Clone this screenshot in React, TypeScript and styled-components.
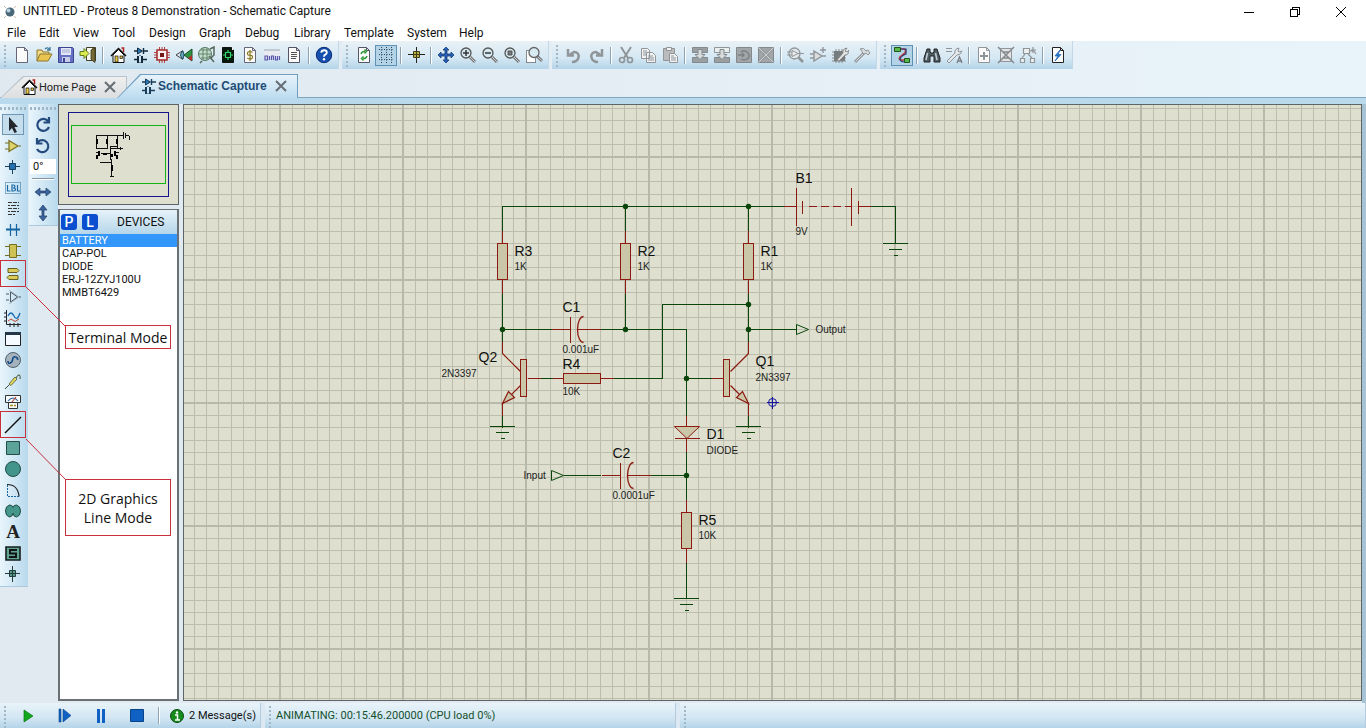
import React, { ReactNode } from "react";
import styled, { createGlobalStyle, css } from "styled-components";

const ui = `Roboto, "Liberation Sans", sans-serif`;
const sheetFont = `"Liberation Sans", Arial, sans-serif`;

const GlobalStyle = createGlobalStyle`
  * { box-sizing: border-box; }
  body { margin: 0; background: #e2eaf1; color: #111; font-family: ${ui}; font-size: 12px; }
  button, input { font: inherit; color: inherit; }
  button { padding: 0; border: 0; background: none; }
`;

const Window = styled.div`
  display: flex;
  flex-direction: column;
  min-height: 100vh;
`;

const TitleBar = styled.header`
  display: flex;
  align-items: center;
  height: 23px;
  padding: 0 2px;
  background: #fff;
`;

const Title = styled.h1`
  flex: 1;
  margin: 0 0 0 5px;
  font-size: 12px;
  font-weight: 400;
  line-height: 23px;
  white-space: nowrap;
`;

const CaptionButton = styled.button`
  display: grid;
  place-items: center;
  width: 46px;
  height: 21px;
`;

const MenuBar = styled.nav`
  display: flex;
  height: 18px;
  background: #fff;
`;

const MenuItem = styled.button<{ $width: number }>`
  width: ${(p) => p.$width}px;
  padding-left: 7px;
  text-align: left;
  line-height: 20px;
  white-space: nowrap;
`;

const ToolbarRow = styled.div`
  display: flex;
  gap: 3px;
  height: 28px;
  background: linear-gradient(90deg, #e1e9f0, #e9f3fa);
`;

const ToolGroup = styled.div`
  display: flex;
  align-items: center;
  height: 28px;
  padding-right: 3px;
  background: linear-gradient(#e9f1f5, #d5e8f4 60%, #b4d4e8);
  border-right: 1px solid #c2d8e6;
`;

const Grip = styled.span<{ $across?: boolean }>`
  flex: none;
  ${(p) =>
    p.$across
      ? css`
          width: 26px;
          height: 3px;
          margin: 3px 0 4px;
          background: repeating-linear-gradient(90deg, #9fb6c6 0 2px, transparent 2px 4px);
        `
      : css`
          width: 2px;
          height: 22px;
          margin: 2px 5px 0 4px;
          background: repeating-linear-gradient(#a3b8c6 0 2px, transparent 2px 4px);
        `}
`;

const Divider = styled.span`
  flex: none;
  width: 2px;
  height: 17px;
  margin: 0 3px;
  background: #8ba3b3;
  border-right: 1px solid #fff;
`;

const ToolButton = styled.button<{ $active?: boolean }>`
  display: grid;
  place-items: center;
  flex: none;
  width: 22px;
  height: 21px;
  ${(p) => p.$active && "background: #b3d3e6; outline: 1px solid #5f91b4; outline-offset: -1px;"}
`;

const TabRow = styled.div`
  display: flex;
  align-items: flex-end;
  height: 29px;
  background: linear-gradient(90deg, #e1e9f0, #e9f3fa);
  border-bottom: 1px solid #7fa6bf;
`;

const Tab = styled.div<{ $active?: boolean }>`
  position: relative;
  display: flex;
  align-items: center;
  flex: none;
  width: ${(p) => (p.$active ? 181 : 127)}px;
  height: ${(p) => (p.$active ? 24 : 22)}px;
  margin: 0 0 -1px ${(p) => (p.$active ? -10 : 0)}px;
  padding: 0 9px 0 ${(p) => (p.$active ? 22 : 20)}px;
  z-index: ${(p) => (p.$active ? 1 : 0)};
  &::before, &::after {
    content: "";
    position: absolute;
    inset: 0;
    z-index: -1;
    background: ${(p) => (p.$active ? "#6f9ec0" : "#b9c4cc")};
    clip-path: polygon(0 100%, 23px 0, 100% 0, 100% 100%);
  }
  &::after {
    inset: 1px 1px 0 1px;
    background: ${(p) => (p.$active ? "linear-gradient(#e8f3fa, #bcdcf0)" : "linear-gradient(#efefef, #dcdee0)")};
  }
`;

const TabLabel = styled.button<{ $active?: boolean }>`
  display: flex;
  align-items: center;
  gap: 1px;
  flex: 1;
  font-family: ${(p) => (p.$active ? sheetFont : ui)};
  font-size: ${(p) => (p.$active ? 12 : 11)}px;
  font-weight: ${(p) => (p.$active ? 700 : 400)};
  color: ${(p) => (p.$active ? "#1f4c74" : "#222")};
  white-space: nowrap;
`;

const CloseTab = styled.button`
  display: grid;
  place-items: center;
  width: 16px;
  height: 16px;
`;

const Workspace = styled.main`
  position: relative;
  display: flex;
  flex: 1;
  padding: 6px 4px 2px 0;
  background:
    linear-gradient(#b9d9ec, #b9d9ec) top / 100% 6px no-repeat,
    linear-gradient(#a6c3d6, #a6c3d6) right / 4px 100% no-repeat;
`;

const SideBar = styled.div<{ $second?: boolean }>`
  display: flex;
  flex-direction: column;
  align-items: center;
  align-self: flex-start;
  width: ${(p) => (p.$second ? 29 : 28)}px;
  padding: 0 ${(p) => (p.$second ? 1 : 2)}px 2px 0;
  margin-left: ${(p) => (p.$second ? 1 : 0)}px;
  background: linear-gradient(90deg, #e9f5fc, #b8d9ed);
  border-bottom: 1px solid #a9c9dd;
`;

const SideTool = styled.button<{ $active?: boolean; $marked?: boolean }>`
  display: grid;
  place-items: center;
  width: ${(p) => (p.$marked ? 24 : 22)}px;
  height: ${(p) => (p.$marked ? 25 : 21)}px;
  ${(p) => p.$active && "background: #c4deed; outline: 1px solid #7096b2; outline-offset: -1px;"}
  ${(p) => p.$marked && "outline: 1px solid #c8303c;"}
`;

const Angle = styled.input`
  width: 26px;
  height: 15px;
  margin: 3px 0 4px;
  padding: 0 3px;
  border: 0;
  background: #fff;
  font-size: 11px;
`;

const Rule = styled.span`
  width: 22px;
  height: 2px;
  margin-bottom: 1px;
  background: #8095a4;
  border-bottom: 1px solid #fff;
`;

const Panel = styled.aside`
  display: flex;
  flex-direction: column;
  flex: none;
  gap: 4px;
  width: 121px;
`;

const Preview = styled.div`
  height: 101px;
  background: #dedfce;
  border: 1px solid #5d6466;
`;

const Devices = styled.section`
  flex: 1;
  background: #fff;
  border: 2px solid #6a7174;
  border-top-width: 1px;
`;

const DeviceHeader = styled.div`
  display: flex;
  align-items: center;
  gap: 5px;
  height: 24px;
  padding-left: 1px;
  background: linear-gradient(#e6f2f9, #b5d6ea);
`;

const PickButton = styled.button`
  width: 16px;
  height: 16px;
  border-radius: 3px;
  background: #0b4fd0;
  color: #fff;
  font-size: 14px;
  font-weight: 500;
  line-height: 16px;
`;

const DeviceTitle = styled.h2`
  margin: 0 0 0 14px;
  font-size: 12px;
  font-weight: 400;
  line-height: 16px;
`;

const DeviceList = styled.ul`
  margin: 0;
  padding: 0;
  list-style: none;
`;

const Device = styled.li<{ $selected?: boolean }>`
  padding: 1px 0 0 2px;
  font-size: 11px;
  line-height: 12px;
  white-space: nowrap;
  ${(p) => p.$selected && "background: #3296fa; color: #fff;"}
`;

const Sheet = styled.div`
  position: relative;
  flex: 1;
  min-width: 0;
  margin-left: 4px;
  overflow: hidden;
  background: #dedfce;
  border: 1px solid #5d6466;
`;

const SheetDrawing = styled.svg`
  position: absolute;
  inset: 0;
  width: 100%;
  height: 100%;
  font-family: ${sheetFont};
`;

const Callout = styled.div<{ $top: number; $height: number; $left: number }>`
  position: absolute;
  left: ${(p) => p.$left}px;
  top: ${(p) => p.$top}px;
  display: grid;
  place-items: center;
  width: 106px;
  height: ${(p) => p.$height}px;
  border: 1px solid #c8303c;
  background: #fff;
  font: 400 14px/19px "Open Sans", sans-serif;
  text-align: center;
`;

const Leaders = styled.svg`
  position: absolute;
  left: 0;
  top: 0;
  pointer-events: none;
`;

const StatusBar = styled.footer`
  display: flex;
  gap: 4px;
  height: 25px;
  background: #dce9f2;
`;

const StatusGroup = styled.div<{ $width?: number }>`
  display: flex;
  align-items: center;
  ${(p) => (p.$width ? `width: ${p.$width}px;` : "flex: 1;")}
  background: linear-gradient(#e9f3f9, #d2e6f3 60%, #b4d4e8);
  border-right: 1px solid #b3cbdc;
  font-size: 11px;
  white-space: nowrap;
`;

const SimButton = styled.button`
  display: grid;
  place-items: center;
  flex: none;
  width: 36px;
  height: 21px;
`;

const Messages = styled.button`
  display: flex;
  align-items: center;
  gap: 5px;
  margin-left: 7px;
`;

const Progress = styled.output`
  color: #14502c;
`;

const Glyph = ({ children, size = 18, crisp }: { children: ReactNode; size?: number; crisp?: boolean }) => (
  <svg width={size} height={size} viewBox={`0 0 ${size} ${size}`} fill="none" aria-hidden="true" shapeRendering={crisp ? "crispEdges" : undefined}>
    {children}
  </svg>
);

const Lens = ({ inner, grey = "#555" }: { inner: ReactNode; grey?: string }) => (
  <>
    <path d="M11 11l5 5" stroke="#777" strokeWidth="3" />
    <path d="M11 11l5 5" stroke="#c8c8c8" />
    <circle cx="7" cy="7" r="5" fill="#d5e9f2" stroke={grey} strokeWidth="1.3" />
    {inner}
  </>
);

const house = (
  <>
    <path d="M4 9v7.500h11V9L9.500 3.500z" fill="#fff" stroke="#111" />
    <path d="M2 10l7.500-7.500L17 10" stroke="#111" strokeWidth="1.500" />
    <path d="M12.500 2h2v4" stroke="#b02020" strokeWidth="1.500" />
    <rect x="6" y="10" width="3" height="6" fill="#e6c640" stroke="#111" strokeWidth=".7" />
    <rect x="11" y="10" width="2.500" height="2.500" fill="#e6c640" stroke="#111" strokeWidth=".7" />
  </>
);

const schematic = (c: string) => (
  <>
    <path d="M3 5h4M12 5h5M12.500 2v6M3 13.500h3M16 13.500h-4" stroke={c} strokeWidth="1.400" />
    <path d="M6.500 2l5 3-5 3z" fill="#2878b8" stroke={c} />
    <path d="M7 10v7M11 10v7" stroke={c} strokeWidth="2" />
    <path d="M9 9v1M9 16v1" stroke={c} />
  </>
);

const page = (c: string) => <path d="M3.500 1.500h8l3 3v12h-11zM11.500 1.500v3h3" fill="#fbfbfb" stroke={c} />;
const G = "#8f9599";

const icons: Record<string, ReactNode> = {
  new: page("#667"),
  open: (
    <>
      <path d="M2 15V4h5l1 2h6v3" fill="#f3dc85" stroke="#8b7630" />
      <path d="M2 15l3-7h12l-4 7z" fill="#e9c44e" stroke="#8b7630" />
      <path d="M10 3c2-2 4-1 5 1m0-3v3h-3" stroke="#3f789a" strokeWidth="1.300" />
    </>
  ),
  save: (
    <>
      <path d="M1.500 1.500h14l1 1v14h-15z" fill="#6670c4" stroke="#3c438f" />
      <path d="M4 2h10v7H4z" fill="#e3e7f6" />
      <path d="M5 4h8M5 6h8" stroke="#a4add0" />
      <path d="M5 11h8v5H5z" fill="#c6cce6" />
      <path d="M6 12h2v4H6z" fill="#3c438f" />
    </>
  ),
  exit: (
    <>
      <path d="M7.500 1.500h9v13h-9z" fill="#8d8450" stroke="#444026" />
      <path d="M8 2h5v12H8z" fill="#f7f7ee" />
      <path d="M12 4l4-2v14.500l-4-3z" fill="#766c34" stroke="#3a3620" strokeWidth=".8" />
      <path d="M1 5.500h4V2.500l5 5-5 5v-3H1z" fill="#dcea50" stroke="#5f7c20" />
    </>
  ),
  home: house,
  schematic: schematic("#12283c"),
  pcb: (
    <>
      <path d="M6.500 1v16M9 1v16M11.500 1v16M1 6.500h16M1 9h16M1 11.500h16" stroke="#b84646" />
      <rect x="4" y="4" width="10" height="10" fill="#fbeeee" stroke="#a02828" strokeWidth="1.500" />
      <rect x="7" y="7" width="4" height="4" fill="#701818" />
    </>
  ),
  view3d: (
    <>
      <path d="M1 9l7-4.500M1 9l7 4.500" stroke="#444" />
      <path d="M8 5q-5 4 0 8q2-4 0-8" fill="#63abc8" stroke="#28505f" />
      <path d="M17 3v12L9 9z" fill="#2e9444" stroke="#174f28" />
      <path d="M17 9v6l-4-3z" fill="#b42c2c" />
    </>
  ),
  gerber: (
    <>
      <circle cx="8" cy="8" r="6.500" fill="#c3dccb" stroke="#547564" />
      <path d="M3 4h10M2 8h12M4 12h8M6 2v12M10 2v12" stroke="#63866c" />
      <path d="M12 10l5 6M13 3l4-2v8l-3 3M5 15l-2 2" stroke="#53685a" strokeWidth="1.500" />
    </>
  ),
  design: (
    <>
      <path d="M3.500 1.500h9l2 2v13h-11z" fill="#06180c" stroke="#111" />
      <path d="M13 1v3h2" fill="#fff" />
      <path d="M4 9h2M12 9h2M9 4v2.500M9 11.500V14M6.500 6.500h5v5h-5z" stroke="#32d86e" strokeWidth="1.200" />
    </>
  ),
  bom: (
    <>
      {page("#667")}
      <path d="M11.500 6.500q-1-1-2.500-1-2.500 0-2.500 2t2.500 1.700q2.500 0 2.500 1.900T9 13q-1.500 0-2.700-1M9 4v11" stroke="#8b7a20" strokeWidth="1.200" />
    </>
  ),
  vsm: (
    <>
      <path d="M1 3h16v9H1z" fill="#e8ebf2" />
      <path d="M1 4h16" stroke="#99a6b4" />
      <path d="M2 10h2.500v4H2zM6.500 10v4M8.500 14v-4h2v4M12.500 10v4h2v-4M16.500 10v4" stroke="#5d54ac" strokeWidth="1.200" />
    </>
  ),
  notes: (
    <>
      {page("#556")}
      <path d="M6 6.500h6M6 8.500h6M6 10.500h6M6 12.500h5" stroke="#555" />
    </>
  ),
  help: (
    <>
      <circle cx="9" cy="9" r="7.700" fill="#174fae" stroke="#0c2f77" />
      <path d="M6.200 6.700q.4-2.500 2.900-2.500 2.700 0 2.700 2.200 0 1.500-1.600 2.300Q9 9.300 9 10.700" stroke="#fff" strokeWidth="1.900" />
      <circle cx="9" cy="13.200" r="1.200" fill="#fff" />
    </>
  ),
  refresh: (
    <>
      {page("#556")}
      <path d="M6 8q1-3 4-2.500M12 10q-1 3-4 2.500M9.500 3.500l2 2-2 2M8.500 14.500l-2-2 2-2" stroke="#329938" strokeWidth="1.500" />
    </>
  ),
  grid: <path d="M2 3.500h15M2 8.500h15M2 13.500h15M4.500 1v16M9.500 1v16M14.500 1v16" stroke="#29475b" strokeDasharray="1 1.500" />,
  origin: (
    <>
      <path d="M9.500 1v16M1 8.500h17" stroke="#222" />
      <path d="M6.500 5.500h6v6h-6z" fill="#bbb043" stroke="#3f3c17" />
      <path d="M9.500 5v7M6 8.500h7" stroke="#3f3c17" />
    </>
  ),
  pan: <path d="M9 1l3 3h-2v4h4V6l3 3-3 3v-2h-4v4h2l-3 3-3-3h2v-4H4v2L1 9l3-3v2h4V4H6z" fill="#2560ba" stroke="#173e74" strokeWidth=".8" />,
  zoomIn: <Lens inner={<path d="M4 7h6M7 4v6" stroke="#333" strokeWidth="1.500" />} />,
  zoomOut: <Lens inner={<path d="M4 7h6" stroke="#333" strokeWidth="1.500" />} />,
  zoomAll: <Lens inner={<path d="M5 5h4v4H5z" fill="#777" stroke="#555" />} />,
  zoomArea: (
    <>
      <path d="M1.500 4.500h9v12h-9z" fill="#fff" stroke="#222" strokeDasharray="1 1" />
      <path d="M12 10l5 5" stroke="#777" strokeWidth="3" />
      <path d="M12 10l5 5" stroke="#c8c8c8" />
      <circle cx="9" cy="6.500" r="5" fill="#d8eaf2" stroke="#666" strokeWidth="1.300" />
    </>
  ),
  undo: <path d="M7 16c8 0 9-10 2-10L5 8.500M3 3v6.500h6" stroke={G} strokeWidth="2.500" />,
  redo: <path d="M11 16C3 16 2 6 9 6l4 2.500M15 3v6.500H9" stroke={G} strokeWidth="2.500" />,
  cut: (
    <>
      <path d="M4 1l7 11M14 1L7 12" stroke={G} strokeWidth="2" />
      <circle cx="5" cy="14" r="2.500" stroke={G} strokeWidth="1.700" />
      <circle cx="13" cy="14" r="2.500" stroke={G} strokeWidth="1.700" />
    </>
  ),
  copy: (
    <>
      <path d="M2.500 2.500h6l2 2v8h-8zM7.500 6.500h6l3 3v7h-9z" fill="#f2f2f2" stroke={G} />
      <path d="M4 5h4M4 7h3M4 9h3M9 10h5M9 12h6M9 14h6" stroke={G} />
    </>
  ),
  paste: (
    <>
      <path d="M2.500 2.500h11v12h-11z" fill="#bbb" stroke={G} />
      <path d="M5.500 1.500h5v3h-5zM8.500 7.500h5l3 3v6h-8z" fill="#f2f2f2" stroke={G} />
      <path d="M10 10h3M10 12h5M10 14h5" stroke={G} />
    </>
  ),
  blockCopy: (
    <>
      <path d="M1.500 1.500h15v5h-15zM1.500 11.500h15v5h-15z" fill="#9a9fa2" stroke="#83898c" />
      <path d="M7 3.500h4v5h3l-5 5-5-5h3z" fill="#d6dadb" stroke="#83898c" />
    </>
  ),
  blockMove: (
    <>
      <path d="M1.500 1.500h15v5h-15z" fill="#e9eeef" stroke={G} />
      <path d="M1.500 11.500h15v5h-15z" fill="#9a9fa2" stroke="#83898c" />
      <path d="M7 3.500h4v5h3l-5 5-5-5h3z" fill="#d6dadb" stroke="#83898c" />
    </>
  ),
  blockRotate: (
    <>
      <path d="M1.500 1.500h15v15h-15z" fill="#a2a6a9" stroke="#84898c" />
      <path d="M6 6q4-3 7 1t-1 6q-3 2-6 0M3 9h6M7 7l2 2-2 2" stroke="#7b8083" strokeWidth="1.400" />
    </>
  ),
  blockDelete: (
    <>
      <path d="M1.500 1.500h15v15h-15z" fill="#a2a6a9" stroke="#84898c" />
      <path d="M2 2l14 14M16 2L2 16" stroke="#7b8083" strokeWidth="2.400" />
      <path d="M2 2l14 14M16 2L2 16" stroke="#d0d3d4" strokeWidth="1.200" />
    </>
  ),
  pick: (
    <>
      <path d="M11 11l5 5" stroke={G} strokeWidth="2.600" />
      <circle cx="7.500" cy="7.500" r="5.500" fill="#e2e8ea" stroke={G} strokeWidth="1.300" />
      <path d="M5 4.500l6 3-6 3zM0 6h5M0 9h5M11 7.500h6" stroke={G} fill="#eee" />
    </>
  ),
  make: <path d="M1 8h4M1 12h4M5 5l8 5-8 5zM13 10h4M14 1v6M11 4h6" fill="#ddd" stroke={G} strokeWidth="1.400" />,
  package: (
    <>
      <path d="M5 3v14M8 3v14M11 3v14M1 6h14M1 9h14M1 12h14M1 15h14" stroke="#84898c" />
      <path d="M3 5h11v10H3z" fill="#777c7f" />
      <path d="M6 14l6-7q-1-4 4-5l-2 3 2 1 2-2q0 5-4 5l-6 6z" fill="#e4e4e4" stroke="#888" />
    </>
  ),
  decompose: (
    <>
      <path d="M2 16L11 7" stroke={G} strokeWidth="3" />
      <path d="M2.500 15.500L11 7" stroke="#ddd" />
      <path d="M7 3q4-2 6 2l2-1 2 3-2 2-2-2-2 1-2-2q0-2-2-3z" fill="#d9dcdd" stroke={G} />
    </>
  ),
  wire: (
    <>
      <path d="M6 3h4q4 0 2 4l-5 4q-2 3 2 3h3" stroke="#c03a36" strokeWidth="1.700" />
      <path d="M8 3h5v5q-5 2-6 5 0 3 5 3" stroke="#283f80" strokeWidth="1.200" />
      <path d="M1.500 1.500h6v4h-6zM11.500 12.500h5v4h-5z" fill="#58b848" stroke="#1f561c" />
    </>
  ),
  find: (
    <>
      <path d="M4 3h3v3l1 1h2l1-1V3h3l3 9v4h-6v-6H7v6H1v-4z" fill="#4e5c64" stroke="#222" />
      <path d="M4.500 7l-1.500 7M12.500 7l1.500 7" stroke="#c1cdd2" strokeWidth="1.500" />
    </>
  ),
  property: (
    <>
      <path d="M1 2.500h6M1 5.500h6" stroke={G} />
      <path d="M2 15l8-8q-1-4 4-5l-1 3 1 1 3-1q-1 4-5 4l-8 8z" fill="#e4e8ea" stroke={G} />
      <path d="M12 17l2.500-6 2.500 6M13 15h4" stroke="#777d80" strokeWidth="1.300" />
    </>
  ),
  addSheet: (
    <>
      {page(G)}
      <path d="M9 6v8M5 10h8" stroke={G} strokeWidth="2" />
    </>
  ),
  delSheet: (
    <>
      <path d="M3.500 2.500h11v13h-11z" fill="#e4e4e4" stroke={G} />
      <path d="M1 1l16 16M17 1L1 17M6 6h6M6 12h6" stroke="#84898c" strokeWidth="1.500" />
    </>
  ),
  hierarchy: <path d="M4.500 2.500h6v5h-6zM1.500 12.500h4v4h-4zM11.500 12.500h4v4h-4zM6 8l-3 4M9 8l4 4M11 5h4l2 3M14 1v6M12 4h5" fill="#eef1f2" stroke={G} strokeWidth="1.200" />,
  erc: (
    <>
      {page("#222")}
      <path d="M11 4L6 10h3l-3 5 6-6.500H9z" fill="#2878d2" stroke="#1560b0" strokeWidth=".7" />
    </>
  ),
  select: <path d="M5 1v14l3-3 2.500 5 2.500-1-2.500-5H14z" fill="#22272b" />,
  component: <path d="M1 6h4M1 12h4M5 3.500l9 5.500-9 5.500zM14 9h3" fill="#ddd36a" stroke="#786f22" strokeWidth="1.200" />,
  junction: (
    <>
      <path d="M8.500 2v14M1 8.500h15" stroke="#163f60" />
      <path d="M5.500 5.500h6v6h-6z" fill="#246fb0" stroke="#163f60" />
    </>
  ),
  label: (
    <>
      <path d="M1.500 3.500h15v11h-15z" stroke="#276995" strokeDasharray="1 1" />
      <path d="M3.500 6v6h3M8 12V6h1.500q1.500 0 1.500 1.500T9 9q2.500 0 2.500 1.500T9.500 12zM13.500 6v6h2.500" stroke="#1768a4" strokeWidth="1.200" />
    </>
  ),
  script: (
    <>
      <path d="M4 2.500h11M4 8.500h11M4 14.500h7" stroke="#333" strokeDasharray="4 1" />
      <path d="M4 5.500h11M4 11.500h11" stroke="#333" strokeDasharray="2 1 5 1" />
    </>
  ),
  bus: (
    <>
      <path d="M2 8.500h14" stroke="#12639e" strokeWidth="2" />
      <path d="M6.500 3v6M12.500 3v6M6.500 9v6M12.500 9v6" stroke="#12639e" strokeWidth="1.200" />
    </>
  ),
  subcircuit: (
    <>
      <path d="M1 4.500h16M1 13.500h16" stroke="#766e20" />
      <path d="M5.500 2.500h7v13h-7z" fill="#cfc254" stroke="#766e20" />
    </>
  ),
  terminal: <path d="M4 3.500h9l2 2-2 2H4zM5 10.500h9v4H5l-2-2z" fill="#dacb58" stroke="#67611e" />,
  pin: (
    <>
      <path d="M2 6h3M2 12h3M15 9h2M6.500 4l7 5-7 5z" stroke="#4c5962" />
      <path d="M5 2l10 7-10 7" stroke="#7e8b94" strokeWidth=".6" />
    </>
  ),
  graph: (
    <>
      <path d="M2.500 1v14.500H17M0 4h3M0 8h3M0 12h3M6 14v4M10 14v4M14 14v4" stroke="#222" />
      <path d="M4 7q3-6 6 0t6-3" stroke="#1768ac" strokeWidth="1.300" />
      <path d="M4 12l3-2 4 2.500 4-2.500" stroke="#bc4832" />
    </>
  ),
  popup: (
    <>
      <path d="M1.500 2.500h15v13h-15z" fill="#f4faff" stroke="#222" />
      <path d="M1 3.500h16" stroke="#253646" strokeWidth="3" />
    </>
  ),
  generator: (
    <>
      <circle cx="9" cy="9" r="7.500" fill="#a5b3bd" stroke="#53616c" />
      <path d="M4 10q0 3 2.500 2 2-1 2-3 .5-4 3-3Q14 6.500 13.500 9" stroke="#164c8a" strokeWidth="1.700" />
    </>
  ),
  probe: (
    <>
      <path d="M1 17l5-5M12 6q2-4 3.500-3 1 1 .5 4" stroke="#444d38" />
      <path d="M5 12l6-7 2 2-6 6.500z" fill="#e4dd58" stroke="#6a6c4e" />
    </>
  ),
  meter: (
    <>
      <path d="M1.500 2.500h15v7h-15zM4.500 9.500h9v6h-9z" fill="#f6fafb" stroke="#333" />
      <path d="M4 8q5-6 10 0" stroke="#2d5f9d" strokeWidth="1.100" />
      <path d="M8 9l4-5" stroke="#b64030" strokeWidth="1.200" />
      <path d="M6 12.500h3M10 12.500h2" stroke="#a88c1e" strokeWidth="1.600" />
    </>
  ),
  line: <path d="M1 17L17 1" stroke="#111" strokeWidth="1.500" />,
  box: <path d="M2.500 2.500h13v13h-13z" fill="#5ca499" stroke="#224d48" />,
  circle: <circle cx="9" cy="9" r="7.500" fill="#42958a" stroke="#224d48" />,
  arc: (
    <>
      <path d="M3 3.500q11 0 12 12" stroke="#222" strokeWidth="1.200" />
      <path d="M3.500 4v11.500H15" stroke="#1768a4" strokeDasharray="2 1" />
    </>
  ),
  path: <path d="M5.500 3q3 0 3.500 2.500Q9.500 3 12.500 3q4 1 4 6t-4 6q-3 0-3.500-4-.5 4-3.500 4-4-1-4-6t4-6z" fill="#46978b" stroke="#214e46" />,
  symbol: (
    <>
      <path d="M2 3h14v13H2z" fill="#62a494" stroke="#151d1b" strokeWidth="1.600" />
      <path d="M13 6H6v3.500h6V13H5" stroke="#101514" strokeWidth="2" />
    </>
  ),
  marker: (
    <>
      <path d="M8.500 1v16M1 8.500h15" stroke="#213e3b" />
      <path d="M5.500 5.500h6v6h-6z" fill="#57998a" stroke="#213e3b" />
      <path d="M8.500 5v7M5 8.500h7" stroke="#213e3b" />
    </>
  ),
  cw: <path d="M14 5A6 6 0 1 0 15 11M9.500 6.500H15V1" stroke="#244b7e" strokeWidth="2.200" />,
  ccw: <path d="M4 5A6 6 0 1 1 3 12M8.500 6.500H3V1" stroke="#244b7e" strokeWidth="2.200" />,
  flipH: <path d="M1 9l5-4v3h6V5l5 4-5 4v-3H6v3z" fill="#3b639b" stroke="#203e69" strokeWidth=".7" />,
  flipV: <path d="M9 1l4 5h-3v6h3l-4 5-4-5h3V6H5z" fill="#3b639b" stroke="#203e69" strokeWidth=".7" />,
};

const toolbars: { tools: string[]; active?: string }[] = [
  { tools: ["new", "open", "save", "exit", "|", "home", "schematic", "pcb", "view3d", "gerber", "design", "bom", "vsm", "notes", "|", "help"] },
  { tools: ["refresh", "grid", "|", "origin", "|", "pan", "zoomIn", "zoomOut", "zoomAll", "zoomArea"], active: "grid" },
  { tools: ["undo", "redo", "|", "cut", "copy", "paste", "|", "blockCopy", "blockMove", "blockRotate", "blockDelete", "|", "pick", "make", "package", "decompose"] },
  { tools: ["wire", "|", "find", "property", "|", "addSheet", "delSheet", "hierarchy", "|", "erc"], active: "wire" },
];

const sideTools = [
  "select", "component", "junction", "label", "script", "bus", "subcircuit", "terminal", "pin", "graph", "popup",
  "generator", "probe", "meter", "line", "box", "circle", "arc", "path", "text", "symbol", "marker",
];

const Letter = styled.span`
  font: 700 19px/20px "Liberation Serif", "Times New Roman", serif;
  color: #222;
`;

const menus: [string, number][] = [
  ["File", 32], ["Edit", 34], ["View", 39], ["Tool", 37], ["Design", 50], ["Graph", 46],
  ["Debug", 49], ["Library", 50], ["Template", 63], ["System", 52], ["Help", 40],
];

const devices = ["BATTERY", "CAP-POL", "DIODE", "ERJ-12ZYJ100U", "MMBT6429"];

/* ---- schematic parts ---- */
const WIRE = "#0a460a";
const PART = "#8c1a10";
const FILL = "#cac7a8";

const Wire = ({ d }: { d: string }) => <path d={d} stroke={WIRE} fill="none" />;
const Pin = ({ d }: { d: string }) => <path d={d} stroke={PART} fill="none" />;
const Name = ({ x, y, children }: { x: number; y: number; children: string }) => (
  <text x={x} y={y - 1} fontSize="14" fill="#111">{children}</text>
);
const Value = ({ x, y, children }: { x: number; y: number; children: string }) => (
  <text x={x} y={y - 1} fontSize="10" fill="#222">{children}</text>
);
const Ground = ({ x, y }: { x: number; y: number }) => (
  <Wire d={`M${x - 13} ${y}h25M${x - 7} ${y + 6}h13M${x - 2} ${y + 12}h4`} />
);
const Resistor = ({ x, y, name, value }: { x: number; y: number; name: string; value: string }) => (
  <>
    <Pin d={`M${x} ${y - 13}v13M${x} ${y + 36}v14`} />
    <rect x={x - 5} y={y} width="10" height="36" fill={FILL} stroke={PART} />
    <Name x={x + 12} y={y + 13}>{name}</Name>
    <Value x={x + 12} y={y + 27}>{value}</Value>
  </>
);
const Capacitor = ({ x, y, name, value }: { x: number; y: number; name: string; value: string }) => (
  <>
    <Pin d={`M${x - 19} ${y}h19M${x} ${y - 13}v26M${x + 7} ${y}h23`} />
    <path d={`M${x + 13} ${y - 13}c-3 0-6 5-6 13s3 13 6 13`} stroke={PART} strokeWidth="1.300" fill="none" shapeRendering="auto" />
    <Name x={x - 8} y={y - 17}>{name}</Name>
    <Value x={x - 8} y={y + 24}>{value}</Value>
  </>
);
/* dir is the side of the base bar on which collector and emitter stand */
const Transistor = ({ x, y, dir }: { x: number; y: number; dir: 1 | -1 }) => (
  <g transform={`translate(${x} ${y})`}>
    <Pin d="M0-37v12M0 25v12" />
    <g shapeRendering="auto" stroke={PART} strokeWidth="1.200">
      <path d={`M0-25L${-18 * dir}-7M${-18 * dir} 7L0 25`} />
      <path d={`M0 25L${-12 * dir} 19L${-6 * dir} 13z`} fill={FILL} />
    </g>
    <rect x={dir === 1 ? -25 : 18} y="-19" width="6" height="37" fill={FILL} stroke={PART} />
    <Wire d="M0 37v12" />
    <Ground x={0} y={48} />
  </g>
);
const junctions = [[625, 206], [748, 206], [502, 329], [625, 329], [748, 304], [748, 329], [686, 378], [686, 475]];
const minor = [13, 25, 38, 50, 62, 75, 87, 99, 111];

const Schematic = () => (
  <SheetDrawing role="img" aria-label="Two transistor circuit">
    <g transform="translate(-184 -105)">
      <defs>
        <pattern id="grid" x="33" y="33" width="123" height="123" patternUnits="userSpaceOnUse">
          <path d={minor.map((n) => `M${n + 0.5} 0v123M0 ${n + 0.5}h123`).join("")} stroke="#bcbdac" />
          <path d="M1 0v123M0 1h123" stroke="#b7b9aa" strokeWidth="2" />
        </pattern>
      </defs>
      <rect x="184" y="105" width="100%" height="100%" fill="url(#grid)" />
    </g>
    <g transform="translate(-183.500 -104.500)" shapeRendering="crispEdges">
      <Wire d="M502 230V206H783M625 206v24M748 206v24" />
      <Wire d="M502 292v49M502 329h49M625 292v37M600 329h86v86M686 378h25" />
      <Wire d="M748 292v49M748 329h48M748 304h-86v74h-49M540 378h12" />
      <Wire d="M870 206h25v37M686 451v49M563 475h37M649 475h37M686 562v36" />
      <Ground x={895} y={243} />
      <Ground x={686} y={598} />
      <Resistor x={502} y={243} name="R3" value="1K" />
      <Resistor x={625} y={243} name="R2" value="1K" />
      <Resistor x={748} y={243} name="R1" value="1K" />
      <Resistor x={686} y={512} name="R5" value="10K" />
      <Pin d="M527 378h13M552 378h11M600 378h13M711 378h12" />
      <rect x="563" y="373" width="37" height="10" fill={FILL} stroke={PART} />
      <Name x={562} y={369}>R4</Name>
      <Value x={562} y={395}>10K</Value>
      <Capacitor x={570} y={329} name="C1" value="0.001uF" />
      <Capacitor x={620} y={475} name="C2" value="0.0001uF" />
      <Transistor x={502} y={378} dir={-1} />
      <Transistor x={748} y={378} dir={1} />
      <Name x={478} y={362}>Q2</Name>
      <Value x={441} y={377}>2N3397</Value>
      <Name x={755} y={366}>Q1</Name>
      <Value x={755} y={381}>2N3397</Value>
      <Pin d="M783 206h13M796 187v38M802 200v13M851 187v38M858 200v13M858 206h12" />
      <path d="M808 206h43" stroke={PART} strokeDasharray="8 4" />
      <Name x={795} y={183}>B1</Name>
      <Value x={795} y={235}>9V</Value>
      <Pin d="M686 415v11M674 438h25M686 438v13" />
      <path d="M674 426h25l-12.500 12z" fill={FILL} stroke={PART} shapeRendering="auto" />
      <Name x={706} y={439}>D1</Name>
      <Value x={706} y={454}>DIODE</Value>
      <g stroke={WIRE} fill="none" shapeRendering="auto">
        <path d="M796 324v10l12-5zM551 470v10l12-5z" />
      </g>
      <Value x={815} y={333}>Output</Value>
      <Value x={523} y={479}>Input</Value>
      {junctions.map(([x, y]) => (
        <circle key={`${x}-${y}`} cx={x} cy={y} r="2.700" fill={WIRE} shapeRendering="auto" />
      ))}
      <g stroke="#1414a0" fill="none">
        <circle cx="772" cy="402" r="4" shapeRendering="auto" />
        <path d="M766 402h12M772 396v12" />
      </g>
    </g>
  </SheetDrawing>
);

const MiniMap = () => (
  <svg width="119" height="99" viewBox="0 0 119 99" fill="none" shapeRendering="crispEdges" role="img" aria-label="Sheet overview">
    <path d="M9.500 7.500h100v84h-100z" stroke="#14148c" />
    <path d="M12.500 20.500h94v58h-94z" stroke="#14b414" />
    <g stroke="#111">
      <path d="M37 30.500h24M61 30.500h3M67 30.500h3M37.500 30v13M48.500 30v13M58.500 30v13M64.500 27v7M66.500 28v5M70.500 31v4M37 43.500h12M52 43.500h12M61.500 42v3" />
      <path d="M51.500 41v14M51 41.500h8M42 48.500h9M37 47.500h4M57 47.500h3M41 57.500h11M52.500 54v18M51 71.500h4" />
    </g>
    <path d="M38 34v5M48 34v5M58 34v5M53 60v6M40 46v5M56 46v5M44 48.500h4M38 50v4M58 50v4M53 49v3" stroke="#000" strokeWidth="2" />
  </svg>
);

const Cross = () => (
  <Glyph size={14}>
    <path d="M2 2l10 10M12 2L2 12" stroke="#666e74" strokeWidth="2" />
  </Glyph>
);

export default function App() {
  return (
    <Window>
      <GlobalStyle />
      <TitleBar>
        <Glyph size={16}>
          <circle cx="8" cy="8" r="4.500" fill="#496779" />
          <circle cx="6.500" cy="6.500" r="2" fill="#b8d1df" />
          <path d="M2 2l2 2M14 2l-2 2M2 14l2-2M14 14l-2-2" stroke="#c7b8a6" />
        </Glyph>
        <Title>UNTITLED - Proteus 8 Demonstration - Schematic Capture</Title>
        <CaptionButton aria-label="Minimize">
          <Glyph size={12} crisp><path d="M1 6.500h10" stroke="#000" /></Glyph>
        </CaptionButton>
        <CaptionButton aria-label="Restore">
          <Glyph size={12} crisp><path d="M1.500 3.500h7v7h-7zM3.500 3V1.500h7v7H9" stroke="#000" /></Glyph>
        </CaptionButton>
        <CaptionButton aria-label="Close">
          <Glyph size={12}><path d="M1 1l10 10M11 1L1 11" stroke="#000" /></Glyph>
        </CaptionButton>
      </TitleBar>
      <MenuBar>
        {menus.map(([m, w]) => (
          <MenuItem key={m} $width={w}>{m}</MenuItem>
        ))}
      </MenuBar>
      <ToolbarRow>
        {toolbars.map((bar, i) => (
          <ToolGroup key={i} role="toolbar">
            <Grip />
            {bar.tools.map((t, j) =>
              t === "|" ? (
                <Divider key={j} />
              ) : (
                <ToolButton key={j} aria-label={t} $active={t === bar.active}>
                  <Glyph>{icons[t]}</Glyph>
                </ToolButton>
              )
            )}
          </ToolGroup>
        ))}
      </ToolbarRow>
      <TabRow>
        <Tab>
          <TabLabel><Glyph>{house}</Glyph>Home Page</TabLabel>
          <CloseTab aria-label="Close Home Page"><Cross /></CloseTab>
        </Tab>
        <Tab $active>
          <TabLabel $active><Glyph>{schematic("#1c3c58")}</Glyph>Schematic Capture</TabLabel>
          <CloseTab aria-label="Close Schematic Capture"><Cross /></CloseTab>
        </Tab>
      </TabRow>
      <Workspace>
        <SideBar role="toolbar">
          <Grip $across />
          {sideTools.map((t) => (
            <SideTool key={t} aria-label={t} $active={t === "select"} $marked={t === "terminal" || t === "line"}>
              {t === "text" ? <Letter>A</Letter> : <Glyph>{icons[t]}</Glyph>}
            </SideTool>
          ))}
        </SideBar>
        <SideBar $second role="toolbar">
          <Grip $across />
          <SideTool aria-label="Rotate clockwise"><Glyph>{icons.cw}</Glyph></SideTool>
          <SideTool aria-label="Rotate anti-clockwise"><Glyph>{icons.ccw}</Glyph></SideTool>
          <Angle aria-label="Rotation" defaultValue="0°" />
          <Rule />
          <SideTool aria-label="Mirror horizontally"><Glyph>{icons.flipH}</Glyph></SideTool>
          <SideTool aria-label="Mirror vertically"><Glyph>{icons.flipV}</Glyph></SideTool>
        </SideBar>
        <Panel>
          <Preview><MiniMap /></Preview>
          <Devices>
            <DeviceHeader>
              <PickButton>P</PickButton>
              <PickButton>L</PickButton>
              <DeviceTitle>DEVICES</DeviceTitle>
            </DeviceHeader>
            <DeviceList>
              {devices.map((d, i) => (
                <Device key={d} $selected={i === 0}>{d}</Device>
              ))}
            </DeviceList>
          </Devices>
        </Panel>
        <Sheet><Schematic /></Sheet>
        <Leaders width="80" height="400" aria-hidden="true">
          <path d="M26 189L65 228M26 341L66 382" stroke="#c8303c" />
        </Leaders>
        <Callout $left={65} $top={227} $height={24}>Terminal Mode</Callout>
        <Callout $left={65} $top={381} $height={57}>2D Graphics<br />Line Mode</Callout>
      </Workspace>
      <StatusBar>
        <StatusGroup $width={261}>
          <Grip />
          <SimButton aria-label="Play"><Glyph><path d="M4 3v12l9-6z" fill="#12a81e" stroke="#0b7414" strokeWidth=".7" /></Glyph></SimButton>
          <SimButton aria-label="Step"><Glyph><path d="M3 2h2v13H3zM7 2v13l8-6.500z" fill="#0f62c4" stroke="#0a4488" strokeWidth=".6" /></Glyph></SimButton>
          <SimButton aria-label="Pause"><Glyph><path d="M5 2h3v14H5zM10 2h3v14h-3z" fill="#0f62c4" /></Glyph></SimButton>
          <SimButton aria-label="Stop"><Glyph><path d="M2.500 2.500h13v12h-13z" fill="#0f62c4" stroke="#0a4488" /></Glyph></SimButton>
          <Divider />
          <Messages>
            <Glyph size={14}>
              <circle cx="7" cy="7" r="6.500" fill="#168a1c" stroke="#0c4f10" />
              <path d="M5 6h2.500v5M5 11h5" stroke="#fff" strokeWidth="1.500" />
              <circle cx="7" cy="3.500" r="1.200" fill="#fff" />
            </Glyph>
            2 Message(s)
          </Messages>
        </StatusGroup>
        <StatusGroup $width={411}>
          <Grip />
          <Progress>ANIMATING: 00:15:46.200000 (CPU load 0%)</Progress>
        </StatusGroup>
        <StatusGroup><Grip /></StatusGroup>
      </StatusBar>
    </Window>
  );
}
